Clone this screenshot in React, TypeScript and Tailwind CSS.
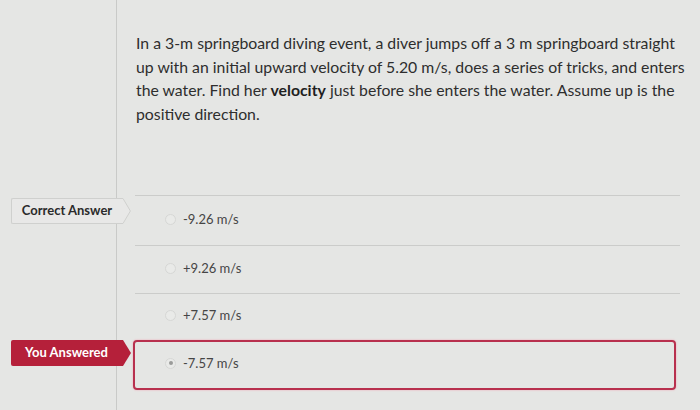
import React from 'react'

type Option = { label: string; selected?: boolean }

const options: Option[] = [
  { label: '-9.26 m/s' },
  { label: '+9.26 m/s' },
  { label: '+7.57 m/s' },
  { label: '-7.57 m/s', selected: true },
]

// row heights / text offsets follow the (slightly uneven) reference
const rowClass = ['flex h-[50px] shrink-0', 'flex h-[48px] shrink-0', 'flex h-[47px] shrink-0']
const padClass = ['pt-[13px]', 'pt-[12px]', 'pt-[11px]']

function Radio({ selected }: { selected?: boolean }) {
  return (
    <span className="w-[11px] h-[11px] rounded-full border border-[#d6d7d5] bg-[#e9eae8] flex items-center justify-center shrink-0">
      {selected && <span className="w-[4px] h-[4px] rounded-full bg-[#9a9b99]" />}
    </span>
  )
}

function Tag({ label, tone }: { label: string; tone: 'gray' | 'red' }) {
  const red = tone === 'red'
  return (
    <div className="flex items-stretch w-max h-[26px] ml-[11px] relative z-10">
      <div
        className={
          red
            ? 'w-[111px] shrink-0 flex items-center justify-center bg-[#b5203a] text-white rounded-l-[2px] text-[13px] font-bold'
            : 'w-[111px] shrink-0 flex items-center justify-center bg-[#e8e8e7] text-[#2b2b2b] border border-r-0 border-[#cfd0ce] rounded-l-[2px] text-[13px] font-bold'
        }
      >
        {label}
      </div>
      <svg width="9" height="26" viewBox="0 0 9 26" className="block shrink-0">
        {red ? (
          <path d="M0 0 L1 0 L9 13 L1 26 L0 26 Z" fill="#b5203a" />
        ) : (
          <path d="M0 0.5 L1 0.5 L8.4 13 L1 25.5 L0 25.5" fill="#e8e8e7" stroke="#cfd0ce" strokeWidth="1" />
        )}
      </svg>
    </div>
  )
}

export default function App() {
  return (
    <div
      className="w-[700px] h-[410px] overflow-hidden bg-[#e5e6e4] flex flex-col"
      style={{ fontFamily: 'Lato, "Open Sans", Arial, sans-serif' }}
    >
      {/* Question */}
      <div className="flex h-[195px] shrink-0">
        <div className="w-[117px] shrink-0 border-r border-[#c9cac8]" />
        <p className="ml-[19px] whitespace-nowrap pt-[31px] text-[15.8px] leading-[23.5px] text-[#2e2e2e]">
          In a 3-m springboard diving event, a diver jumps off a 3 m springboard straight
          <br />
          up with an initial upward velocity of 5.20 m/s, does a series of tricks, and enters
          <br />
          the water. Find her <span className="font-bold text-[#1f1f1f]">velocity</span> just before she enters the
          water. Assume up is the
          <br />
          positive direction.
        </p>
      </div>

      {/* Options */}
      {options.slice(0, 3).map((opt, i) => (
        <div key={opt.label} className={rowClass[i]}>
          <div className="w-[117px] shrink-0 border-r border-[#c9cac8] pt-[3px]">
            {i === 0 && <Tag label="Correct Answer" tone="gray" />}
          </div>
          <div className="flex-1 ml-[18px] mr-[20px] border-t border-[#cbccca]">
            <div className={`flex items-center gap-[7px] pl-[30px] ${padClass[i]} text-[13px] leading-5 text-[#454545]`}>
              <Radio selected={opt.selected} />
              <span>{opt.label}</span>
            </div>
          </div>
        </div>
      ))}

      <div className="flex flex-1">
        <div className="w-[117px] shrink-0 border-r border-[#c9cac8]">
          <Tag label="You Answered" tone="red" />
        </div>
        <div className="flex-1 ml-[16px] mr-[24px]">
          <div className="h-[50px] border-2 border-[#b8304e] rounded-[4px] shadow-[0_0_2px_#f0a0b0]">
            <div className="flex items-center gap-[7px] pl-[30px] pt-[11px] text-[13px] leading-5 text-[#454545]">
              <Radio selected />
              <span>{options[3].label}</span>
            </div>
          </div>
        </div>
      </div>
    </div>
  )
}
